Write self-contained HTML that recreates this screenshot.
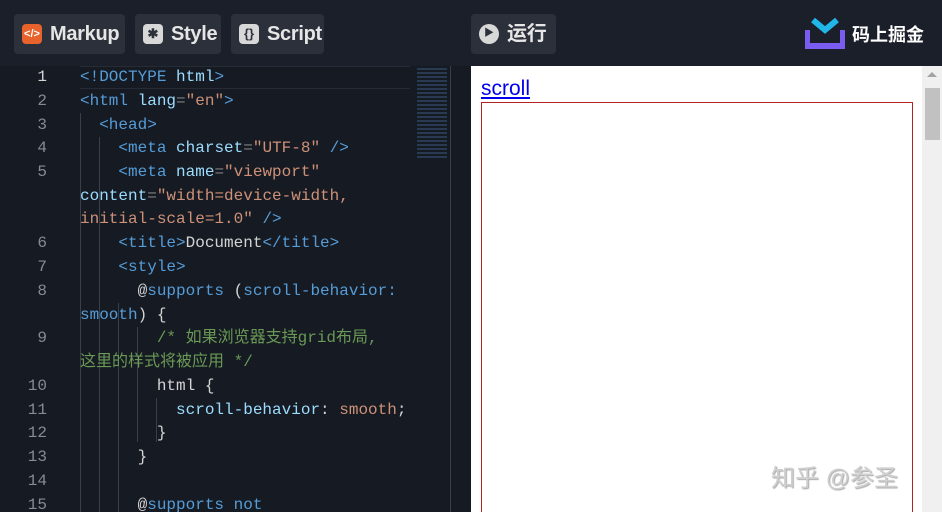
<!DOCTYPE html>
<html><head><meta charset="utf-8">
<style>
*{margin:0;padding:0;box-sizing:border-box}
html,body{width:942px;height:512px;overflow:hidden}
body{background:#151a23;font-family:"Liberation Sans","Noto Sans CJK SC",sans-serif;position:relative}
.top{position:absolute;left:0;top:0;width:942px;height:66px;background:#1b1f2a}
.btn{position:absolute;top:14px;height:40px;background:#2b303b;border-radius:4px;color:#e6e6e6;font-weight:bold;font-size:20px;line-height:40px;padding-left:36px;letter-spacing:-0.3px}
.ic{position:absolute;left:8px;top:10px;width:20px;height:20px;border-radius:4px;background:#d8d8d8;color:#2b303b;font-size:13px;line-height:20px;text-align:center;letter-spacing:0}
.ed{position:absolute;left:0;top:66px;width:453px;height:446px;background:#151a23;font-family:"Liberation Mono","Noto Sans CJK SC",monospace;font-size:16px;overflow:hidden}
.ln{position:absolute;left:0;width:47px;text-align:right;color:#858b96;line-height:23px;height:23px}
.cd{position:absolute;left:80px;white-space:pre;color:#d4d4d4;line-height:23px;height:23px}
.t{color:#569cd6}.a{color:#9cdcfe}.s{color:#ce9178}.p{color:#808080}.c{color:#6a9955}.k{color:#569cd6}
.g{position:absolute;width:1px;background:#3a3f4a}
.pv{position:absolute;left:471px;top:66px;width:451px;height:446px;background:#fff;overflow:hidden}
.sb{position:absolute;left:922px;top:66px;width:20px;height:446px;background:#f0f0f0}
</style></head><body>
<div class="top">
 <div class="btn" style="left:14px;width:111px"><span class="ic" style="background:#e8622c;color:#fff;font-size:11px">&lt;/&gt;</span>Markup</div>
 <div class="btn" style="left:135px;width:86px"><span class="ic">✱</span>Style</div>
 <div class="btn" style="left:231px;width:93px"><span class="ic">{}</span>Script</div>
 <div class="btn" style="left:471px;width:85px"><span class="ic" style="border-radius:50%;font-size:10px">▶</span>运行</div>
 <svg style="position:absolute;left:805px;top:17px" width="40" height="32" viewBox="0 0 40 32"><path d="M0 13h5v13h30V13h5v19H0z" fill="#7b5cf0"/><path d="M8 3l12 10L32 3" stroke="#20b7e8" stroke-width="6" fill="none"/></svg>
 <div style="position:absolute;left:852px;top:21px;color:#fff;font-size:18px;font-weight:bold">码上掘金</div>
</div>
<div class="ed">
 <div style="position:absolute;left:80px;top:0;width:330px;height:23px;border-top:1px solid #262b35;border-bottom:1px solid #262b35"></div>
 <div class="g" style="left:80px;top:47px;height:399px"></div>
 <div class="g" style="left:99px;top:71px;height:375px"></div>
 <div class="g" style="left:118px;top:237px;height:209px"></div>
 <div class="g" style="left:137px;top:261px;height:115px"></div>
 <div class="g" style="left:156px;top:332px;height:44px"></div>
 <div class="g" style="left:450px;top:0;height:446px"></div>
 <div style="position:absolute;left:417px;top:2px;width:30px;height:90px;background:repeating-linear-gradient(#3b5a80 0 2px,transparent 2px 4px);opacity:.5"></div>
</div>
<div class="ed" style="background:none">
 <div class="ln" style="top:0px;color:#d4d4d4">1</div><div class="cd" style="top:0px"><span class="t">&lt;!DOCTYPE</span> <span class="a">html</span><span class="t">&gt;</span></div>
 <div class="ln" style="top:24px">2</div><div class="cd" style="top:24px"><span class="t">&lt;html</span> <span class="a">lang</span><span class="p">=</span><span class="s">"en"</span><span class="t">&gt;</span></div>
 <div class="ln" style="top:48px">3</div><div class="cd" style="top:48px">  <span class="t">&lt;head&gt;</span></div>
 <div class="ln" style="top:71px">4</div><div class="cd" style="top:71px">    <span class="t">&lt;meta</span> <span class="a">charset</span><span class="p">=</span><span class="s">"UTF-8"</span> <span class="t">/&gt;</span></div>
 <div class="ln" style="top:95px">5</div><div class="cd" style="top:95px">    <span class="t">&lt;meta</span> <span class="a">name</span><span class="p">=</span><span class="s">"viewport"</span></div>
 <div class="cd" style="top:119px"><span class="a">content</span><span class="p">=</span><span class="s">"width=device-width,</span></div>
 <div class="cd" style="top:142px"><span class="s">initial-scale=1.0"</span> <span class="t">/&gt;</span></div>
 <div class="ln" style="top:166px">6</div><div class="cd" style="top:166px">    <span class="t">&lt;title&gt;</span>Document<span class="t">&lt;/title&gt;</span></div>
 <div class="ln" style="top:190px">7</div><div class="cd" style="top:190px">    <span class="t">&lt;style&gt;</span></div>
 <div class="ln" style="top:214px">8</div><div class="cd" style="top:214px">      @<span class="k">supports</span> (<span class="k">scroll-behavior:</span></div>
 <div class="cd" style="top:238px"><span class="k">smooth</span>) {</div>
 <div class="ln" style="top:261px">9</div><div class="cd" style="top:261px">        <span class="c">/* 如果浏览器支持grid布局,</span></div>
 <div class="cd" style="top:285px"><span class="c">这里的样式将被应用 */</span></div>
 <div class="ln" style="top:309px">10</div><div class="cd" style="top:309px">        html {</div>
 <div class="ln" style="top:333px">11</div><div class="cd" style="top:333px">          <span class="a">scroll-behavior</span>: <span class="s">smooth</span>;</div>
 <div class="ln" style="top:356px">12</div><div class="cd" style="top:356px">        }</div>
 <div class="ln" style="top:380px">13</div><div class="cd" style="top:380px">      }</div>
 <div class="ln" style="top:404px">14</div>
 <div class="ln" style="top:428px">15</div><div class="cd" style="top:428px">      @<span class="k">supports not</span></div>
</div>
<div class="pv">
 <div style="position:absolute;left:10px;top:11px;color:#0000ee;text-decoration:underline;font-size:21px">scroll</div>
 <div style="position:absolute;left:10px;top:36px;width:432px;height:430px;border:1px solid #b22222"></div>
 <div style="position:absolute;left:300px;top:392px;color:#cfcfcf;font-size:24px;text-shadow:1px 1px 1px #aaa">知乎 @参圣</div>
</div>
<div class="sb"><div style="position:absolute;left:5px;top:6px;border:5px solid transparent;border-bottom:5px solid #a3a3a3;border-top:0"></div><div style="position:absolute;left:3px;top:22px;width:15px;height:52px;background:#c1c1c1"></div></div>
</body></html>
